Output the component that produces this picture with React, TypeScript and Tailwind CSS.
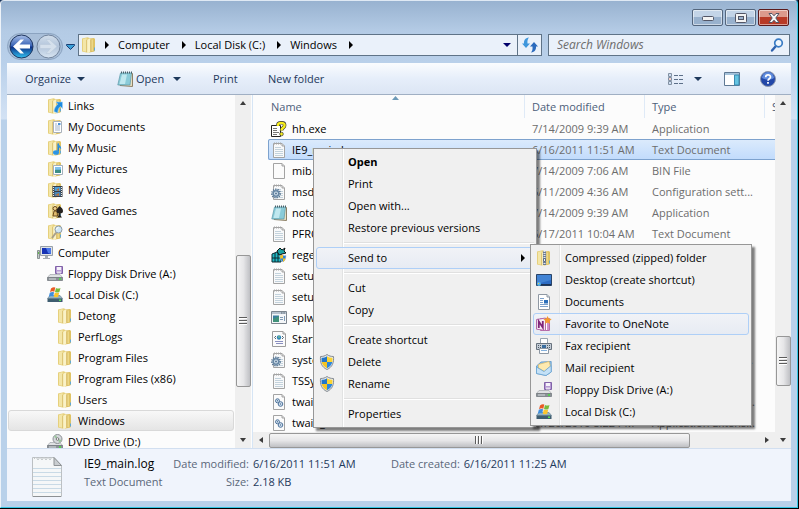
import type { ReactNode } from "react";

type IconProps = { className?: string };

const Svg = ({
  size = 16,
  children,
}: {
  size?: number;
  children: ReactNode;
}) => (
  <svg
    width={size}
    height={size}
    viewBox="0 0 16 16"
    fill="none"
    aria-hidden="true"
    className="shrink-0"
  >
    {children}
  </svg>
);

const FolderShape = () => (
  <>
    <path d="M1 1.500 6.500.3l2 .7v14l-2 .7L1 14.500z" fill="#e6d07c" />
    <path d="M2 2.200 5.500 1v13.800L2 14z" fill="#f3e6a8" />
    <path d="M8 1.500 13 1l1 1v12l-1.500.8L8 15.500z" fill="#dfc365" />
    <path d="M8.500 2.500h3.500v11.500H8.500z" fill="#ecd787" />
    <path d="M6 3 8.500 1.500 9.500 2v12.500L7 16l-1-.5z" fill="#faf2c6" />
    <path d="M5.700 3v12" stroke="#cdb05a" strokeWidth=".6" />
    <path d="M9.800 2.500V14.500" stroke="#cbaa4c" strokeWidth=".8" />
    <path d="M13.500 10.500v3" stroke="#62a8d4" />
  </>
);

const FolderIcon = () => (
  <Svg>
    <FolderShape />
  </Svg>
);

const LinksIcon = () => (
  <Svg>
    <FolderShape />
    <path
      d="M9 4h6.500v6.500l-2.200-2C11.500 10 10.800 12 10.700 15L7 13.500c.2-3 1.500-5.400 3.900-7.300z"
      fill="#1c8be0"
      stroke="#9fd0f5"
      strokeWidth=".6"
    />
  </Svg>
);

const DocumentsFolderIcon = () => (
  <Svg>
    <FolderShape />
    <path d="M6.500 2.500h8v11h-8z" fill="#fff" stroke="#a9b1ba" />
    <path d="M8 5h2M8 7h5M8 9h5M8 11h5" stroke="#9fb2cb" />
    <path d="M11 4h2.500v2H11z" fill="#4b94da" />
  </Svg>
);

const MusicIcon = () => (
  <Svg>
    <FolderShape />
    <path d="M11.200 3.500v8" stroke="#1b7fd0" strokeWidth="1.500" />
    <path d="M11 3c.5 2.500 4 2.500 3 7-.5-2-1.500-2.500-3-3z" fill="#2b94e4" />
    <ellipse cx="9" cy="12.500" rx="3" ry="2.300" fill="#2b94e4" />
  </Svg>
);

const PicturesIcon = () => (
  <Svg>
    <FolderShape />
    <path d="M6.500 4.500h9v9h-9z" fill="#fff" stroke="#a5b0bc" />
    <path d="M8 6h6v3H8z" fill="#7fc1ee" />
    <path d="M8 9c2-1 3 .5 6-.5V12H8z" fill="#3c8f86" />
  </Svg>
);

const VideosIcon = () => (
  <Svg>
    <FolderShape />
    <path d="M5.500 4h10v11h-10z" fill="#3a3f46" />
    <path d="M7.500 5h6v4h-6z" fill="#4e9ed6" />
    <path d="M7.500 10h6v4h-6z" fill="#4787b8" />
    <path d="M9 8l3-2v3zM8 13l4-2v3z" fill="#b6713d" />
    <path
      d="M6.500 5v10M14.500 5v10"
      stroke="#e5e8ea"
      strokeDasharray="1 1"
    />
  </Svg>
);

const GamesIcon = () => (
  <Svg>
    <FolderShape />
    <circle cx="8" cy="5.500" r="2" fill="#efd28d" stroke="#6b4a1a" />
    <path d="M7 8h3l.5 5H6z" fill="#dfbb6e" stroke="#6b4a1a" />
    <path
      d="M12.500 3c2 1.500 3.500 3 3.500 5s-1.500 2.500-2.500 2v2.500l1.500 2h-5l1.500-2V10C10 10.500 9.500 9 9.500 8c0-1.500 1.500-3.500 3-5z"
      fill="#26221f"
    />
  </Svg>
);

const SearchesIcon = () => (
  <Svg>
    <FolderShape />
    <path d="M9.200 8.500 5 14" stroke="#a9a08a" strokeWidth="2" />
    <circle cx="11.500" cy="5.500" r="3.500" fill="#cfe6f5" stroke="#8f9ba5" />
    <path d="M9.500 5.500a2 2 0 0 1 2-2" stroke="#fff" />
  </Svg>
);

const ComputerIcon = () => (
  <Svg>
    <path d="M.5 5.500h2v8h-2z" fill="#c2c9c9" stroke="#8a9293" />
    <path d="M1 7h1v2H1z" fill="#63b84c" />
    <path d="M3.500 1.500h12v9h-12z" fill="#dfe3e7" stroke="#98a0a8" />
    <path d="M5 3h9v6H5z" fill="#1632b4" />
    <path d="M9 3h5v6l-3-1z" fill="#4a78ea" />
    <path d="M8 11h3v2h2v1H6v-1h2z" fill="#a4abb2" />
  </Svg>
);

const DriveBase = () => (
  <>
    <path d="M3 8.500h10l2.500 3H.5z" fill="#dfe1e3" stroke="#a2a6aa" strokeWidth=".7" />
    <path d="M.5 11.500h15v3H.5z" fill="#8b9297" stroke="#6d7378" strokeWidth=".7" />
    <path d="M2 13h7" stroke="#d8dcdf" />
    <path d="M12 12h2v2h-2z" fill="#56cf52" />
  </>
);

const FloppyIcon = () => (
  <Svg>
    <DriveBase />
    <path d="M8.500.5h7v7h-7z" fill="#b79bd4" stroke="#8163a8" />
    <path d="M10 1h4v3h-4z" fill="#f6f3fa" />
    <path d="M10 5.500h4v2h-4z" fill="#e4dded" />
  </Svg>
);

const DiscIcon = () => (
  <Svg>
    <DriveBase />
    <circle cx="10.500" cy="5" r="4.500" fill="#d5d8dc" stroke="#8c9094" />
    <path d="M10.500 5 7 3l2-2zM10.500 5l4 1-2 3z" fill="#9bc99b" />
    <circle cx="10.500" cy="5" r="1.300" fill="#fff" stroke="#777" />
  </Svg>
);

const LocalDiskIcon = () => (
  <Svg>
    <path d="M3 8.500h10l2.500 3H.5z" fill="#8fb1c4" stroke="#6d8797" strokeWidth=".7" />
    <path d="M.5 11.500h15v3.500H.5z" fill="#3e5d70" />
    <path d="M12 12.500h2v1.500h-2z" fill="#56e052" />
    <path d="M4 1.500Q6.500-.4 8.300.6L7.300 4.700Q5.300 3.700 3 5.200z" fill="#ea5a25" />
    <path d="M9 1q2 1 4.500 0l-1.100 4q-2.200 1-4.400 0z" fill="#79bb3c" />
    <path d="M2.800 5.800q2.200-1.500 4.300-.5l-.9 4q-2.200-1-4.400.5z" fill="#3e8ede" />
    <path d="M7.800 5.600q2.200 1 4.400 0L11.200 9.700q-2.200 1-4.400 0z" fill="#fbc42e" />
  </Svg>
);

const PageLines = () => (
  <>
    <path d="M2.500 1.500h8.500l2.500 2.500v11.500h-11z" fill="#f8f9fa" stroke="#a3a3a3" />
    <path d="M11 1.500V4h2.500" fill="#ddd" stroke="#a3a3a3" />
    <path
      d="M4 5.500h6M4 7.500h8M4 9.500h8M4 11.500h8M4 13.500h8"
      stroke="#c3d2dc"
    />
  </>
);

const TextFileIcon = () => (
  <Svg>
    <PageLines />
    <path d="M3 1.500h8" stroke="#a5a5a5" strokeDasharray="1 1" strokeWidth="2" />
  </Svg>
);

const BinFileIcon = () => (
  <Svg>
    <path d="M2.500.5H11L13.500 3v12.500h-11z" fill="#fbfbfb" stroke="#a3a3a3" />
    <path d="M11 .5V3h2.500" fill="#ddd" stroke="#a3a3a3" />
  </Svg>
);

const ConfigIcon = () => (
  <Svg>
    <PageLines />
    <path d="M3 1.500h8" stroke="#a5a5a5" strokeDasharray="1 1" strokeWidth="2" />
    <circle
      cx="5"
      cy="9.500"
      r="4"
      stroke="#587693"
      strokeWidth="2"
      strokeDasharray="1.200 1"
    />
    <circle cx="5" cy="9.500" r="2.700" fill="#dbe7f1" stroke="#6787a5" strokeWidth="1.500" />
    <circle cx="5" cy="9.500" r="1" fill="#587693" />
  </Svg>
);

const NotepadIcon = () => (
  <Svg>
    <path d="M5 2.500h10.500v13L3 14.500z" fill="#e9dfc2" stroke="#8d8066" />
    <path d="M3.500 2h11L13 14H.8z" fill="#8acbd8" stroke="#5b98a8" strokeWidth=".7" />
    <path d="M5 3.500h5L8 13H2.500z" fill="#c0e8ef" />
    <path d="M4 1.500h11" stroke="#48606a" strokeDasharray="1 1" strokeWidth="2" />
  </Svg>
);

const HelpFileIcon = () => (
  <Svg>
    <path d="M.5 4.500h9v11h-9z" fill="#fff" stroke="#222" />
    <path d="M2 7.500h4M2 9.500h4M2 11.500h6M2 13.500h4" stroke="#777" />
    <path
      d="M7 5V3.500c0-2.200 6.500-2.200 6.500 0V5c0 1.500-3 1.500-3 4.500"
      stroke="#333"
      strokeWidth="3.600"
    />
    <path
      d="M7 5V3.500c0-2.200 6.500-2.200 6.500 0V5c0 1.500-3 1.500-3 4.500"
      stroke="#f7ee1c"
      strokeWidth="2.400"
    />
    <circle cx="10.500" cy="13" r="1.800" fill="#f7ee1c" stroke="#333" strokeWidth=".7" />
  </Svg>
);

const ShieldIcon = () => (
  <Svg>
    <path
      d="M8 .5c2 1.500 4 2 6.500 2 .5 6-1 10.500-6.500 13C2.500 13 1 8.500 1.500 2.500 4 2.500 6 2 8 .5z"
      fill="#e4e8ec"
      stroke="#858b91"
    />
    <path d="M8 2.200V8H2.700c-.2-1.500-.2-2.700-.1-4.200C4.800 3.700 6.500 3.200 8 2.200z" fill="#2277c9" />
    <path d="M8 2.200V8h5.300c.2-1.500.2-2.700.1-4.200-2.200-.1-3.900-.6-5.400-1.600z" fill="#fbd432" />
    <path d="M8 8v6.200C5 12.700 3.300 10.700 2.700 8z" fill="#f5c422" />
    <path d="M8 8v6.200c3-1.500 4.700-3.500 5.300-6.200z" fill="#2b86dc" />
  </Svg>
);

const RegeditIcon = () => (
  <Svg>
    <path d="M1 7l5-2 4 2v8H1z" fill="#1fb9c4" stroke="#0d2a33" />
    <path d="M1 11h9M4 6v9M7 6v9" stroke="#0d2a33" />
    <path d="M6 4l3-3 2 2 3-2-1 3 2 2-4 1-3 1z" fill="#19a3a5" stroke="#111" />
    <path d="M9 8c1 .7 2 .8 3 0 1 .8 2 .7 3 0 .2 3-.5 5.500-3 7-2.500-1.500-3.200-4-3-7z" fill="#2b80d4" stroke="#ccd" strokeWidth=".5" />
    <path d="M12 8v3.500H9.300l-.2-3zM12 15v-3.500h2.600C14 13 13.300 14.200 12 15z" fill="#f5c422" />
  </Svg>
);

const AppIcon = () => (
  <Svg>
    <path d="M.5 1.500h15v12H.5z" fill="#f4f6f8" stroke="#7c858e" />
    <path d="M1 2h14v2H1z" fill="#b7c3cf" />
    <path d="M10 3h4" stroke="#53606c" strokeDasharray="1 .6" />
    <path d="M2 5.500h6V12H2z" fill="#3a7ea0" />
    <path d="M2 9l6-3v6H2z" fill="#41927a" />
    <path d="M9 7.500h3M9 9.500h3M13.500 6v5" stroke="#7f9ab4" />
  </Svg>
);

const XmlIcon = () => (
  <Svg>
    <path d="M1.500.5H12L14.500 3v12.500h-13z" fill="#fbfbfb" stroke="#9d9d9d" />
    <path d="M12 .5V3h2.500" fill="#ddd" stroke="#9d9d9d" />
    <circle cx="8" cy="6.500" r="2.200" fill="#2f86b8" />
    <path d="M7 5.500h2v1H7z" fill="#8ed27c" />
    <path d="M5 5 3.500 6.500 5 8M11 5l1.500 1.500L11 8" stroke="#52616e" />
    <path d="M4 10.500h8M5 12.500h7" stroke="#8a8fc0" />
  </Svg>
);

const DllIcon = () => (
  <Svg>
    <path d="M2.500.5H11L13.500 3v12.500h-11z" fill="#fbfbfb" stroke="#a3a3a3" />
    <path d="M11 .5V3h2.500" fill="#ddd" stroke="#a3a3a3" />
    <circle cx="6.500" cy="6.800" r="2" fill="#dbe8f4" stroke="#4c7199" />
    <circle cx="9.500" cy="10" r="2.300" fill="#dbe8f4" stroke="#4c7199" />
    <circle cx="6.500" cy="6.800" r=".7" fill="#4c7199" />
    <circle cx="9.500" cy="10" r=".8" fill="#4c7199" />
  </Svg>
);

const ZipIcon = () => (
  <Svg>
    <FolderShape />
    <path d="M8.500 1v14" stroke="#6c7b92" strokeWidth="3" />
    <path d="M8.500 1v14" stroke="#dfe5ee" strokeWidth="2" strokeDasharray="1 1" />
    <path d="M7.500 8.500h2v3h-2z" fill="#eef1f5" stroke="#5c6c86" />
  </Svg>
);

const DesktopIcon = () => (
  <Svg>
    <path d="M.5 2.500h15v11H.5z" fill="#2d6cc4" stroke="#2a4468" />
    <path d="M1 3h14v5L1 12z" fill="#4f92e0" opacity=".6" />
    <path d="M1 12h14v1.500H1z" fill="#1d3557" />
    <circle cx="3" cy="12" r="2" fill="#56b2e8" />
    <path d="M2 11h1v1H2z" fill="#f4c542" />
  </Svg>
);

const DocumentIcon = () => (
  <Svg>
    <path d="M2.500.5H11L13.500 3v12.500h-11z" fill="#fff" stroke="#8f98a3" />
    <path d="M11 .5V3h2.500" fill="#dde3ea" stroke="#8f98a3" />
    <path d="M4 4.500h4M4 6.500h3M4 8.500h3M4 10.500h8M4 12.500h8" stroke="#7ea2cc" />
    <path d="M8 6h4v3.500H8z" fill="#2b6fbb" />
  </Svg>
);

const OneNoteIcon = () => (
  <Svg>
    <path d="M4.500 2.500h9v12h-9z" fill="#fff" stroke="#b56aa9" />
    <path d="M12 5v9" stroke="#cf8fc5" strokeWidth="2" />
    <path d="M.5 3.500 9.500 2v12.500l-9-1.300z" fill="#f6eaf4" stroke="#b56aa9" />
    <path d="M2.800 12V5.500l4 6V5" stroke="#80267a" strokeWidth="1.800" />
    <path d="m11.500 0 1.300 2.600 2.900.3-2.200 2 .6 2.900-2.600-1.400L9 7.800l.5-2.900-2.100-2 2.900-.3z" fill="#f59a2e" />
  </Svg>
);

const FaxIcon = () => (
  <Svg>
    <path d="M4.500.5h7v5h-7z" fill="#fff" stroke="#98a3b0" />
    <path d="M.5 5.500h15v6H.5z" fill="#c3ccd6" stroke="#68727e" />
    <path d="M2 7.500h3M2 9.500h3M11 7.500h3M11 9.500h3" stroke="#4d5964" strokeDasharray="1 1" />
    <path d="M6 7h4v3H6z" fill="#396c9e" />
    <path d="M3.500 10.500h9v5h-9z" fill="#fdfdfd" stroke="#8d97a3" />
    <path d="M5 12.500h6" stroke="#84b0dc" />
  </Svg>
);

const MailIcon = () => (
  <Svg>
    <path d="M.5 6 5 2l10.200-.5v10.500L10 15.500.5 13.500z" fill="#8fc0e8" stroke="#5d97c8" strokeWidth=".8" />
    <path d="M2.500 4.500 13 1.500l1.500 5-6 5-6-3.500z" fill="#fdeab0" stroke="#e2bd66" strokeWidth=".7" />
    <path d="M.5 7 8 11.500l7.200-6v6.500L10 15.500.5 13.500z" fill="#c4e1f7" stroke="#6aa3d0" strokeWidth=".8" />
  </Svg>
);

const RefreshIcon = () => (
  <Svg>
    <path d="M7 .5C3 1 1.800 3.500 2 6.500H0L4 11l4-4.500H5.500C5.300 4 5.500 2 7 .5z" fill="#3f97dc" />
    <path d="M9 15.500c4-.5 5.200-3 5-6h2L12 5 8 9.500h2.500c.2 2.500 0 4.500-1.500 6z" fill="#2a6abd" />
  </Svg>
);

const MagnifierIcon = () => (
  <Svg>
    <path d="M6.500 9.500 3 13.500" stroke="#2f62ad" strokeWidth="2.400" strokeLinecap="round" />
    <circle cx="9.500" cy="6" r="3.800" fill="#f1f7fc" stroke="#3a7cc4" strokeWidth="1.700" />
  </Svg>
);

const ViewsIcon = () => (
  <Svg>
    <path d="M.5 2.500h3v3h-3zM.5 6.500h3v3h-3zM.5 10.500h3v3h-3z" fill="#fff" stroke="#8190a3" />
    <path d="M2 3.500v1M2 11.500v1" stroke="#3d7ccb" />
    <path d="M2 7.500v1" stroke="#d04a30" />
    <path d="M6 4.500h4M6 8.500h4M6 12.500h4M11 4.500h4M11 8.500h4M11 12.500h4" stroke="#5c6f88" />
  </Svg>
);

const PreviewPaneIcon = () => (
  <Svg>
    <path d="M.5 1.500h15v13H.5z" fill="#fff" stroke="#5f7994" />
    <path d="M1 2h14v2H1z" fill="#a6c3db" />
    <path d="M10.500 4h4.500v10h-4.500z" fill="#65c4e2" stroke="#3b8bb0" />
  </Svg>
);

const HelpIcon = () => (
  <Svg>
    <circle cx="8" cy="8" r="7.500" fill="#2247a8" stroke="#8c97ae" />
    <path d="M2 7a6 6 0 0 1 12 0c-3 2-8 2-12 0z" fill="#5f8bdc" />
    <path
      d="M5.700 6.200c0-3 4.800-3 4.800-.2C10.500 7.700 8 7.800 8 9.700"
      stroke="#fff"
      strokeWidth="1.700"
    />
    <path d="M7.100 11h1.800v1.700H7.100z" fill="#fff" />
  </Svg>
);

const LargeTextFileIcon = () => (
  <svg width="32" height="42" viewBox="0 0 32 42" fill="none" aria-hidden="true">
    <path d="M1.500 1.500H23l7.500 8v31h-29z" fill="#f5f7f8" stroke="#bcc0c3" />
    <path d="M23 1.500v8h7.500z" fill="#c9cdd0" stroke="#8f9396" />
    <path
      d="M2 12.500h28M2 16.500h28M2 20.500h28M2 24.500h28M2 28.500h28M2 32.500h28M2 36.500h28"
      stroke="#c9dae6"
    />
    <path d="M2 40.500h28" stroke="#8d9194" />
    <path
      d="M3 3l2-2 2 3 2-3 2 3 2-3 2 3 2-3 2 3 2-3"
      stroke="#c2c6c9"
    />
  </svg>
);

const DownArrow = ({ className = "text-[#1e395b]" }: IconProps) => (
  <svg width="8" height="4" viewBox="0 0 8 4" aria-hidden="true" className={className}>
    <path d="M0 0h8L4 4z" fill="currentColor" />
  </svg>
);

const RightArrow = () => (
  <svg width="4" height="8" viewBox="0 0 4 8" aria-hidden="true">
    <path d="M0 0l4 4-4 4z" fill="#000" />
  </svg>
);

const treeItems = [
  { name: "Links", icon: <LinksIcon />, level: 1 },
  { name: "My Documents", icon: <DocumentsFolderIcon />, level: 1 },
  { name: "My Music", icon: <MusicIcon />, level: 1 },
  { name: "My Pictures", icon: <PicturesIcon />, level: 1 },
  { name: "My Videos", icon: <VideosIcon />, level: 1 },
  { name: "Saved Games", icon: <GamesIcon />, level: 1 },
  { name: "Searches", icon: <SearchesIcon />, level: 1 },
  { name: "Computer", icon: <ComputerIcon />, level: 0 },
  { name: "Floppy Disk Drive (A:)", icon: <FloppyIcon />, level: 1 },
  { name: "Local Disk (C:)", icon: <LocalDiskIcon />, level: 1 },
  { name: "Detong", icon: <FolderIcon />, level: 2 },
  { name: "PerfLogs", icon: <FolderIcon />, level: 2 },
  { name: "Program Files", icon: <FolderIcon />, level: 2 },
  { name: "Program Files (x86)", icon: <FolderIcon />, level: 2 },
  { name: "Users", icon: <FolderIcon />, level: 2 },
  { name: "Windows", icon: <FolderIcon />, level: 2, selected: true },
  { name: "DVD Drive (D:)", icon: <DiscIcon />, level: 1 },
];

const levelPadding = ["pl-7", "pl-[38px]", "pl-12"];

const files = [
  { name: "hh.exe", icon: <HelpFileIcon />, date: "7/14/2009 9:39 AM", type: "Application" },
  { name: "IE9_main.log", icon: <TextFileIcon />, date: "6/16/2011 11:51 AM", type: "Text Document", selected: true },
  { name: "mib.bin", icon: <BinFileIcon />, date: "7/14/2009 7:06 AM", type: "BIN File" },
  { name: "msdfmap.ini", icon: <ConfigIcon />, date: "6/11/2009 4:36 AM", type: "Configuration sett..." },
  { name: "notepad.exe", icon: <NotepadIcon />, date: "7/14/2009 9:39 AM", type: "Application" },
  { name: "PFRO.log", icon: <TextFileIcon />, date: "6/17/2011 10:04 AM", type: "Text Document" },
  { name: "regedit.exe", icon: <RegeditIcon />, date: "7/14/2009 9:39 AM", type: "Application" },
  { name: "setupact.log", icon: <TextFileIcon />, date: "6/17/2011 10:04 AM", type: "Text Document" },
  { name: "setuperr.log", icon: <TextFileIcon />, date: "6/16/2011 9:53 AM", type: "Text Document" },
  { name: "splwow64.exe", icon: <AppIcon />, date: "7/14/2009 9:39 AM", type: "Application" },
  { name: "Starter.xml", icon: <XmlIcon />, date: "6/11/2009 4:31 AM", type: "XML Document" },
  { name: "system.ini", icon: <ConfigIcon />, date: "6/11/2009 5:08 AM", type: "Configuration sett..." },
  { name: "TSSysprep.log", icon: <TextFileIcon />, date: "6/16/2011 9:55 AM", type: "Text Document" },
  { name: "twain.dll", icon: <DllIcon />, date: "6/11/2009 5:41 AM", type: "Application Extens..." },
  { name: "twain_32.dll", icon: <DllIcon />, date: "11/20/2010 8:22 PM", type: "Application Extens..." },
];

const menuGroups: {
  name: string;
  icon?: ReactNode;
  bold?: boolean;
  open?: boolean;
}[][] = [
  [
    { name: "Open", bold: true },
    { name: "Print" },
    { name: "Open with..." },
    { name: "Restore previous versions" },
  ],
  [{ name: "Send to", open: true }],
  [{ name: "Cut" }, { name: "Copy" }],
  [
    { name: "Create shortcut" },
    { name: "Delete", icon: <ShieldIcon /> },
    { name: "Rename", icon: <ShieldIcon /> },
  ],
  [{ name: "Properties" }],
];

const sendToItems = [
  { name: "Compressed (zipped) folder", icon: <ZipIcon /> },
  { name: "Desktop (create shortcut)", icon: <DesktopIcon /> },
  { name: "Documents", icon: <DocumentIcon /> },
  { name: "Favorite to OneNote", icon: <OneNoteIcon />, open: true },
  { name: "Fax recipient", icon: <FaxIcon /> },
  { name: "Mail recipient", icon: <MailIcon /> },
  { name: "Floppy Disk Drive (A:)", icon: <FloppyIcon /> },
  { name: "Local Disk (C:)", icon: <LocalDiskIcon /> },
];

interface MenuItemProps {
  name: string;
  icon?: ReactNode;
  bold?: boolean;
  open?: boolean;
  arrow?: boolean;
}

const MenuItem = ({ name, icon, bold, open, arrow }: MenuItemProps) => (
  <button
    type="button"
    role="menuitem"
    className={`flex h-[22px] w-full items-center rounded-[3px] border pr-2 text-left ${
      open
        ? "border-[#aecff7] bg-linear-to-b from-[#f1f3f8]/80 to-[#e4eaf4]/80"
        : "border-transparent"
    } ${bold ? "font-bold" : ""}`}
  >
    <span className="flex w-[31px] shrink-0 pl-[2px]">{icon}</span>
    <span className="flex-1 whitespace-nowrap">{name}</span>
    {arrow && <RightArrow />}
  </button>
);

const menuPanel =
  "absolute border border-[#979797] bg-[#f0f0f0] bg-[linear-gradient(90deg,transparent_28px,#e2e3e3_28px,#e2e3e3_29px,#fff_29px,#fff_30px,transparent_30px)] p-[2px] shadow-[3px_3px_2px_rgba(0,0,0,0.5)]";

const ContextMenu = () => (
  <div role="menu" aria-label="File" className={`${menuPanel} top-[147px] left-[312px] w-56`}>
    {menuGroups.map((group, i) => (
      <div key={group[0].name}>
        {i > 0 && (
          <div className="ml-7 flex h-2 items-center">
            <hr className="h-[2px] flex-1 border-t border-b border-t-[#e0e0e0] border-b-white" />
          </div>
        )}
        {group.map((item) => (
          <MenuItem key={item.name} {...item} arrow={item.open} />
        ))}
      </div>
    ))}
  </div>
);

const SendToMenu = () => (
  <div role="menu" aria-label="Send to" className={`${menuPanel} top-[243px] left-[529px] w-[222px]`}>
    {sendToItems.map((item) => (
      <MenuItem key={item.name} {...item} />
    ))}
  </div>
);

const ScrollArrow = ({ label, path }: { label: string; path: string }) => (
  <button
    type="button"
    aria-label={label}
    className="flex size-4 shrink-0 items-center justify-center"
  >
    <svg width="8" height="8" viewBox="0 0 8 8" aria-hidden="true">
      <path d={path} fill="#3c3c3c" />
    </svg>
  </button>
);

const VerticalScrollbar = ({
  before,
  thumb,
  after,
}: {
  before: string;
  thumb: string;
  after: string;
}) => (
  <div className="flex w-4 shrink-0 flex-col items-center bg-[#efefef]">
    <ScrollArrow label="Scroll up" path="M1 6l3-4 3 4z" />
    <div className={`basis-0 ${before}`} />
    <div
      className={`flex w-[15px] basis-0 flex-col items-center justify-center gap-px rounded-[2px] border border-[#979797] bg-linear-to-r from-[#f5f5f5] via-[#e6e6e8] to-[#bfc0c4] ${thumb}`}
    >
      <span className="h-[2px] w-2 border-b border-white bg-[#5c5c5c]" />
      <span className="h-[2px] w-2 border-b border-white bg-[#5c5c5c]" />
      <span className="h-[2px] w-2 border-b border-white bg-[#5c5c5c]" />
    </div>
    <div className={`basis-0 ${after}`} />
    <ScrollArrow label="Scroll down" path="M1 2h6L4 6z" />
  </div>
);

const HorizontalScrollbar = () => (
  <div className="flex h-4 shrink-0 items-center bg-[#efefef]">
    <ScrollArrow label="Scroll left" path="M6 1v6L2 4z" />
    <div className="flex h-[15px] grow-[418] basis-0 items-center justify-center gap-px rounded-[2px] border border-[#979797] bg-linear-to-b from-[#f5f5f5] via-[#e6e6e8] to-[#bfc0c4]">
      <span className="h-2 w-[2px] border-r border-white bg-[#5c5c5c]" />
      <span className="h-2 w-[2px] border-r border-white bg-[#5c5c5c]" />
      <span className="h-2 w-[2px] border-r border-white bg-[#5c5c5c]" />
    </div>
    <div className="grow-[69] basis-0" />
    <ScrollArrow label="Scroll right" path="M2 1v6l4-3z" />
  </div>
);

const captionButton =
  "flex h-[17px] w-[31px] items-center justify-center rounded-[2px] border shadow-[inset_0_0_0_1px_rgba(255,255,255,0.5)]";

const TitleBar = () => (
  <div className="flex h-8 shrink-0 items-start justify-end gap-[2px] pt-2 pr-[2px]">
    <button
      type="button"
      aria-label="Minimize"
      className={`${captionButton} border-[#54667d] bg-linear-to-b from-[#c3d4e7] from-50% to-[#98b1cd] to-50%`}
    >
      <svg width="12" height="6" viewBox="0 0 12 6" aria-hidden="true">
        <rect x=".5" y="1.500" width="11" height="4" rx="1" fill="#f3f3f3" stroke="#535666" />
      </svg>
    </button>
    <button
      type="button"
      aria-label="Maximize"
      className={`${captionButton} border-[#54667d] bg-linear-to-b from-[#c3d4e7] from-50% to-[#98b1cd] to-50%`}
    >
      <svg width="12" height="10" viewBox="0 0 12 10" aria-hidden="true">
        <rect x=".5" y=".5" width="11" height="9" rx="1" fill="#f3f3f3" stroke="#535666" />
        <rect x="3.500" y="3.500" width="5" height="3" fill="#9db4cd" stroke="#535666" />
      </svg>
    </button>
    <button
      type="button"
      aria-label="Close"
      className={`${captionButton} border-[#5b1a1c] bg-linear-to-b from-[#dc9a8d] from-50% to-[#b83a27] to-50%`}
    >
      <svg width="12" height="10" viewBox="0 0 12 10" aria-hidden="true">
        <path
          d="M1 .5h3l2 2.300L8 .5h3L7.800 5 11 9.500H8L6 7.200 4 9.500H1L4.200 5z"
          fill="#f6f6f6"
          stroke="#535666"
        />
      </svg>
    </button>
  </div>
);

const NavButtons = () => (
  <div className="flex w-[71px] shrink-0 items-center">
    <div className="flex items-center gap-[2px] rounded-full border border-[#8ba3c0] bg-[#a9bfd9] px-px">
      <button type="button" aria-label="Back">
        <svg width="25" height="25" viewBox="0 0 25 25" aria-hidden="true">
          <defs>
            <linearGradient id="back" x1="0" y1="0" x2="0" y2="1">
              <stop offset="0" stopColor="#a9c0e8" />
              <stop offset=".48" stopColor="#3560b4" />
              <stop offset=".52" stopColor="#0d2f86" />
              <stop offset="1" stopColor="#32c3f2" />
            </linearGradient>
          </defs>
          <circle cx="12.500" cy="12.500" r="11.500" fill="url(#back)" stroke="#20365f" />
          <path d="M4 12.500 11.500 5.500h3.500l-4.500 5H21v4H10.500l4.500 5h-3.500z" fill="#fff" />
        </svg>
      </button>
      <button type="button" aria-label="Forward">
        <svg width="25" height="25" viewBox="0 0 25 25" aria-hidden="true">
          <defs>
            <linearGradient id="forward" x1="0" y1="0" x2="0" y2="1">
              <stop offset="0" stopColor="#d3dfec" />
              <stop offset=".5" stopColor="#b2c4da" />
              <stop offset="1" stopColor="#d8e5f2" />
            </linearGradient>
          </defs>
          <circle cx="12.500" cy="12.500" r="11.500" fill="url(#forward)" stroke="#71839c" />
          <path d="M21 12.500 13.500 5.500H10l4.500 5H4v4h10.500l-4.500 5h3.500z" fill="#d5e0ec" stroke="#b6c6d8" strokeWidth=".5" />
        </svg>
      </button>
    </div>
    <button type="button" aria-label="Recent pages" className="ml-[3px]">
      <svg width="9" height="6" viewBox="0 0 9 6" aria-hidden="true">
        <path d="M.5.5h8v1l-4 4-4-4z" fill="#3aa0d8" stroke="#1b3f74" />
      </svg>
    </button>
  </div>
);

const Crumb = ({ name }: { name: string }) => (
  <>
    <button type="button" className="mr-3 ml-[9px]">
      {name}
    </button>
    <RightArrow />
  </>
);

const AddressBar = () => (
  <div className="flex h-[30px] shrink-0 items-start pr-px">
    <NavButtons />
    <nav
      aria-label="Address"
      className="mt-px mr-[6px] flex h-[22px] flex-1 items-center border border-[#5f7387] bg-[#eaf1fa]"
    >
      <span className="ml-[2px] flex w-6">
        <FolderIcon />
      </span>
      <RightArrow />
      <Crumb name="Computer" />
      <Crumb name="Local Disk (C:)" />
      <Crumb name="Windows" />
      <button type="button" aria-label="Previous locations" className="mr-[6px] ml-auto">
        <DownArrow className="text-[#00006b]" />
      </button>
      <button
        type="button"
        aria-label="Refresh"
        className="flex h-full w-6 items-center justify-center border-l border-[#5f7387]"
      >
        <RefreshIcon />
      </button>
    </nav>
    <label className="mt-px flex h-[22px] w-[242px] items-center border border-[#5f7387] bg-[#eaf1fa] pr-1 pl-2">
      <input
        type="search"
        aria-label="Search Windows"
        placeholder="Search Windows"
        className="min-w-0 flex-1 bg-transparent text-[12px] italic outline-none placeholder:text-[#6d6d6d]"
      />
      <MagnifierIcon />
    </label>
  </div>
);

const Toolbar = () => (
  <div className="flex h-8 shrink-0 items-center border-b border-[#a0afc3] bg-linear-to-b from-[#fafcfe] via-[#e6eefa] via-50% to-[#dce6f4] pr-[15px] pl-[18px] text-[#1e395b]">
    <button type="button" className="flex w-[92px] items-center gap-[6px]">
      Organize
      <DownArrow />
    </button>
    <button type="button" className="flex w-14 items-center gap-[3px]">
      <NotepadIcon />
      Open
    </button>
    <button type="button" aria-label="Open options" className="w-10">
      <DownArrow />
    </button>
    <button type="button" className="w-[55px] text-left">Print</button>
    <button type="button">New folder</button>
    <button type="button" aria-label="Change view" className="ml-auto">
      <ViewsIcon />
    </button>
    <button type="button" aria-label="View options" className="ml-[10px]">
      <DownArrow />
    </button>
    <button type="button" aria-label="Show the preview pane" className="ml-[22px]">
      <PreviewPaneIcon />
    </button>
    <button type="button" aria-label="Help" className="ml-5">
      <HelpIcon />
    </button>
  </div>
);

const NavigationPane = () => (
  <aside className="flex w-[244px] shrink-0">
    <ul className="flex-1 overflow-hidden">
      {treeItems.map(({ name, icon, level, selected }) => (
        <li key={name} className="px-px">
          <button
            type="button"
            className={`flex h-[21px] w-full items-center gap-[5px] rounded-[3px] border text-left whitespace-nowrap ${
              levelPadding[level]
            } ${
              selected
                ? "border-[#d9d9d9] bg-linear-to-b from-[#f8f8f8] to-[#e5e5e5]"
                : "border-transparent"
            }`}
          >
            {icon}
            {name}
          </button>
        </li>
      ))}
    </ul>
    <VerticalScrollbar before="grow-[145]" thumb="grow-[131]" after="grow-[45]" />
  </aside>
);

const headerCell = "border-r border-[#dfeaf7] text-left font-normal text-[#4c607a]";

const FileList = () => (
  <section className="ml-px flex min-w-0 flex-1 border-l border-[#d6e5f5]">
    <div className="flex min-w-0 flex-1 flex-col">
      <div className="relative min-h-0 flex-1 overflow-hidden pl-[15px]">
        <svg
          width="7"
          height="4"
          viewBox="0 0 7 4"
          aria-hidden="true"
          className="absolute top-px left-[139px]"
        >
          <path d="M0 4l3.500-4L7 4z" fill="#6d9ab8" />
        </svg>
        <table className="w-[calc(100%+40px)] table-fixed border-separate border-spacing-0">
          <thead>
            <tr className="h-[23px]">
              <th className={`${headerCell} pl-[3px]`}>Name</th>
              <th className={`${headerCell} w-[120px] pl-[7px]`}>Date modified</th>
              <th className={`${headerCell} w-[120px] pl-[7px]`}>Type</th>
              <th className={`${headerCell} w-[50px] pl-[7px]`}>Size</th>
            </tr>
          </thead>
          <tbody>
            {files.map(({ name, icon, date, type, selected }) => (
              <tr
                key={name}
                className={`h-[21px] text-[#6d6d6d] ${
                  selected
                    ? "rounded-[2px] bg-linear-to-b from-[#dcebfc] to-[#c1dbfc] outline-1 -outline-offset-1 outline-[#7da2ce]"
                    : ""
                }`}
              >
                <td className="p-0 pl-[3px] text-black">
                  <span className="flex items-center gap-[5px]">
                    {icon}
                    {name}
                  </span>
                </td>
                <td className="p-0 pl-[7px] whitespace-nowrap">{date}</td>
                <td className="p-0 pl-[7px] whitespace-nowrap">{type}</td>
                <td className="p-0" />
              </tr>
            ))}
          </tbody>
        </table>
      </div>
      <HorizontalScrollbar />
    </div>
    <VerticalScrollbar before="grow-[225]" thumb="grow-[48]" after="grow-[46]" />
  </section>
);

const DetailsPane = () => (
  <footer className="flex h-[53px] shrink-0 items-start border-t border-[#d2dff0] bg-[#f0f4fc] text-[#5a6779]">
    <div className="w-[77px] shrink-0 pt-[7px] pl-6">
      <LargeTextFileIcon />
    </div>
    <div className="w-[87px] shrink-0 pt-[6px] leading-[18px] whitespace-nowrap">
      <p className="text-[12px] text-black">IE9_main.log</p>
      <p>Text Document</p>
    </div>
    <dl className="grid w-[220px] shrink-0 grid-cols-[78px_auto] gap-x-1 pt-[6px] leading-[18px] whitespace-nowrap">
      <dt className="text-right">Date modified:</dt>
      <dd className="text-[#1e395b]">6/16/2011 11:51 AM</dd>
      <dt className="text-right">Size:</dt>
      <dd className="text-[#1e395b]">2.18 KB</dd>
    </dl>
    <dl className="flex gap-1 pt-[6px] leading-[18px] whitespace-nowrap">
      <dt>Date created:</dt>
      <dd className="text-[#1e395b]">6/16/2011 11:25 AM</dd>
    </dl>
  </footer>
);

export default function App() {
  return (
    <div className="h-screen border-r border-b border-black bg-[#16325c] font-['Open_Sans','Noto_Sans',sans-serif] text-[11px] leading-4 text-black">
      <main className="relative flex h-full flex-col rounded-t-[4px] border-t border-r border-b border-l border-t-[#dfe9f4] border-r-[#35c6e4] border-b-[#35c6e4] border-l-[#eef3f9] bg-[linear-gradient(180deg,#98b2d0_0,#b4cbe5_30px,#b9d0ea_62px,#d3e2f4_118px,#b9d1ea_119px)] px-[6px] pb-[6px]">
        <TitleBar />
        <AddressBar />
        <Toolbar />
        <div className="flex min-h-0 flex-1 bg-[#fcfcfc]">
          <NavigationPane />
          <FileList />
        </div>
        <DetailsPane />
        <ContextMenu />
        <SendToMenu />
      </main>
    </div>
  );
}
